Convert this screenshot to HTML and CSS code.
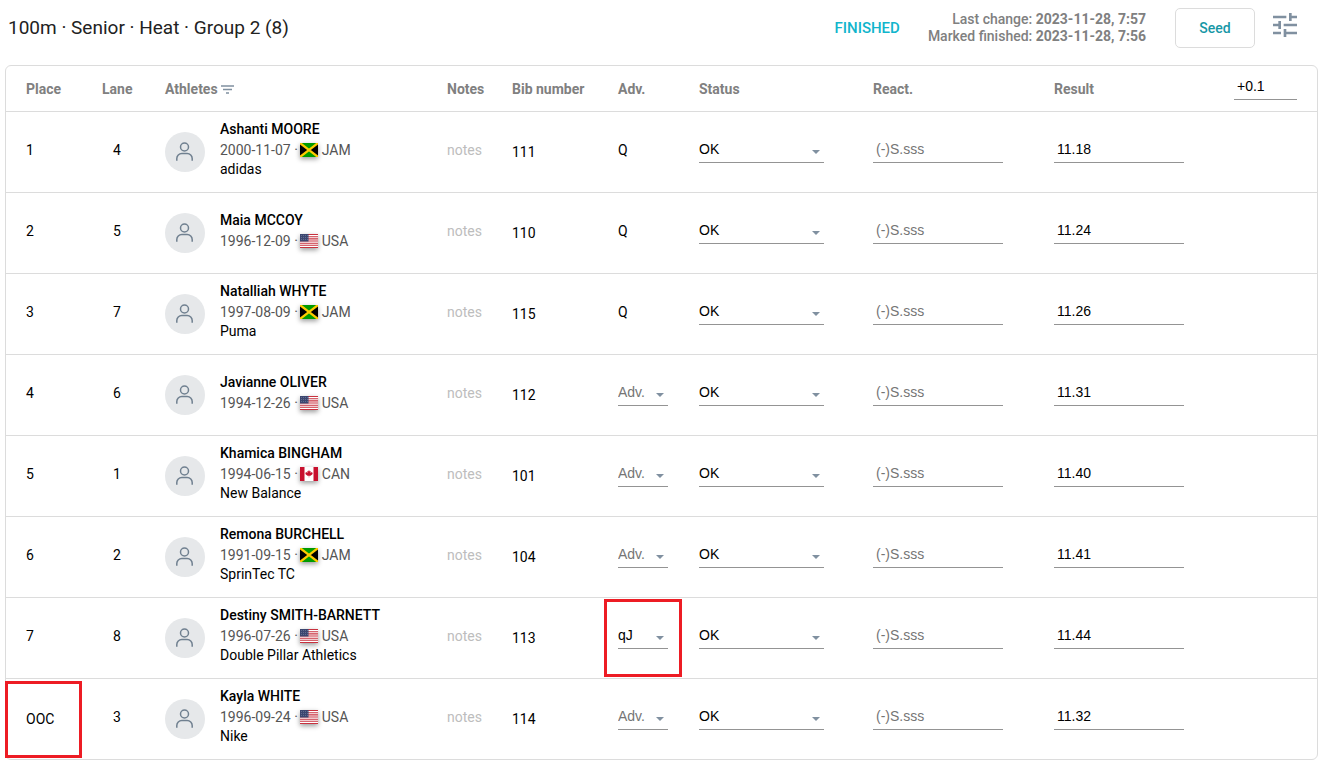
FILE: index.html
```
<!DOCTYPE html>
<html lang="en">
<head>
  <meta charset="UTF-8" />
  <meta name="viewport" content="width=device-width, initial-scale=1.0" />
  <title>100m Senior Heat - Group 2</title>
  <link rel="stylesheet" href="styles.css">
</head>
<body>
<svg class="sprite" aria-hidden="true">
  <symbol id="person" viewBox="0 0 20 20">
    <circle cx="9.500" cy="5" r="4" />
    <path d="M1.800 18.800v-2.300a5 5 0 0 1 5-5h5.400a5 5 0 0 1 5 5v2.300" />
  </symbol>
  <symbol id="jam" viewBox="0 0 18 14">
    <rect width="18" height="14" fill="#009b00" />
    <path d="M0 0v14L9 7zM18 0v14L9 7z" fill="#000" />
    <path d="M0 0l18 14M18 0L0 14" stroke="#fecb00" stroke-width="2.200" />
  </symbol>
  <symbol id="usa" viewBox="0 0 18 14">
    <rect width="18" height="14" fill="#fff" />
    <path d="M0 .5h18M0 2.700h18M0 4.900h18M0 7h18M0 9.200h18M0 11.300h18M0 13.500h18" stroke="#c8313e" stroke-width="1.100" />
    <rect width="8.500" height="7.500" fill="#3c4770" />
    <path d="M1 1.500h7M1 3.500h7M1 5.500h7" stroke="#7d86a5" stroke-width=".6" stroke-dasharray="1 1" />
  </symbol>
  <symbol id="can" viewBox="0 0 18 14">
    <rect width="18" height="14" fill="#fff" />
    <path d="M0 0h4.500v14H0zM13.500 0H18v14h-4.500z" fill="#c8102e" />
    <path d="M9 3l.8 1.500.9-.4-.2 2 1.300-1 .9 1-.3 1.200-1.900 1.500H9.200v1.700h-.4V8.800H7.500L5.600 7.300l-.3-1.200.9-1 1.300 1-.2-2 .9.400z" fill="#c8102e" />
  </symbol>
</svg>

<header class="topbar">
  <h1>100m · Senior · Heat · Group 2 (8)</h1>
  <span class="state">FINISHED</span>
  <div class="changes">
    <div>Last change: <b>2023-11-28, 7:57</b></div>
    <div>Marked finished: <b>2023-11-28, 7:56</b></div>
  </div>
  <button class="seed" type="button">Seed</button>
  <button class="tune" type="button" aria-label="Settings">
    <svg viewBox="3 3 18 18"><path d="M3 17v2h6v-2H3zM3 5v2h10V5H3zm10 16v-2h8v-2h-8v-2h-2v6h2zM7 9v2H3v2h4v2h2V9H7zm14 4v-2H11v2h10zm-6-4h2V7h4V5h-4V3h-2v6z" /></svg>
  </button>
</header>

<div class="table-box">
<table>
  <colgroup>
    <col class="c-place"><col class="c-lane"><col><col class="c-notes"><col class="c-bib">
    <col class="c-adv"><col class="c-status"><col class="c-react"><col class="c-result"><col class="c-wind">
  </colgroup>
  <thead>
    <tr>
      <th>Place</th>
      <th>Lane</th>
      <th>Athletes
        <svg class="filter" viewBox="0 0 13 9"><path d="M0 1h13M2 4.500h9M5 8h3" /></svg>
      </th>
      <th>Notes</th>
      <th>Bib number</th>
      <th>Adv.</th>
      <th>Status</th>
      <th>React.</th>
      <th>Result</th>
      <th><input class="wind" type="text" value="+0.1" aria-label="Wind"></th>
    </tr>
  </thead>
  <tbody>
    <tr>
      <td>1</td>
      <td class="lane">4</td>
      <td><div class="athlete">
        <span class="avatar"><svg><use href="#person" /></svg></span>
        <div>
          <div class="name">Ashanti MOORE</div>
          <div class="born">2000-11-07 · <svg class="flag"><use href="#jam" /></svg> JAM</div>
          <div class="club">adidas</div>
        </div>
      </div></td>
      <td class="notes">notes</td>
      <td class="bib">111</td>
      <td>Q</td>
      <td><div class="select"><select aria-label="Status"><option>OK</option></select></div></td>
      <td><input type="text" placeholder="(-)S.sss" aria-label="Reaction time"></td>
      <td><input type="text" value="11.18" aria-label="Result"></td>
      <td></td>
    </tr>
    <tr>
      <td>2</td>
      <td class="lane">5</td>
      <td><div class="athlete">
        <span class="avatar"><svg><use href="#person" /></svg></span>
        <div>
          <div class="name">Maia MCCOY</div>
          <div class="born">1996-12-09 · <svg class="flag"><use href="#usa" /></svg> USA</div>
        </div>
      </div></td>
      <td class="notes">notes</td>
      <td class="bib">110</td>
      <td>Q</td>
      <td><div class="select"><select aria-label="Status"><option>OK</option></select></div></td>
      <td><input type="text" placeholder="(-)S.sss" aria-label="Reaction time"></td>
      <td><input type="text" value="11.24" aria-label="Result"></td>
      <td></td>
    </tr>
    <tr>
      <td>3</td>
      <td class="lane">7</td>
      <td><div class="athlete">
        <span class="avatar"><svg><use href="#person" /></svg></span>
        <div>
          <div class="name">Natalliah WHYTE</div>
          <div class="born">1997-08-09 · <svg class="flag"><use href="#jam" /></svg> JAM</div>
          <div class="club">Puma</div>
        </div>
      </div></td>
      <td class="notes">notes</td>
      <td class="bib">115</td>
      <td>Q</td>
      <td><div class="select"><select aria-label="Status"><option>OK</option></select></div></td>
      <td><input type="text" placeholder="(-)S.sss" aria-label="Reaction time"></td>
      <td><input type="text" value="11.26" aria-label="Result"></td>
      <td></td>
    </tr>
    <tr>
      <td>4</td>
      <td class="lane">6</td>
      <td><div class="athlete">
        <span class="avatar"><svg><use href="#person" /></svg></span>
        <div>
          <div class="name">Javianne OLIVER</div>
          <div class="born">1994-12-26 · <svg class="flag"><use href="#usa" /></svg> USA</div>
        </div>
      </div></td>
      <td class="notes">notes</td>
      <td class="bib">112</td>
      <td><div class="select small"><select class="empty" aria-label="Advance"><option>Adv.</option></select></div></td>
      <td><div class="select"><select aria-label="Status"><option>OK</option></select></div></td>
      <td><input type="text" placeholder="(-)S.sss" aria-label="Reaction time"></td>
      <td><input type="text" value="11.31" aria-label="Result"></td>
      <td></td>
    </tr>
    <tr>
      <td>5</td>
      <td class="lane">1</td>
      <td><div class="athlete">
        <span class="avatar"><svg><use href="#person" /></svg></span>
        <div>
          <div class="name">Khamica BINGHAM</div>
          <div class="born">1994-06-15 · <svg class="flag"><use href="#can" /></svg> CAN</div>
          <div class="club">New Balance</div>
        </div>
      </div></td>
      <td class="notes">notes</td>
      <td class="bib">101</td>
      <td><div class="select small"><select class="empty" aria-label="Advance"><option>Adv.</option></select></div></td>
      <td><div class="select"><select aria-label="Status"><option>OK</option></select></div></td>
      <td><input type="text" placeholder="(-)S.sss" aria-label="Reaction time"></td>
      <td><input type="text" value="11.40" aria-label="Result"></td>
      <td></td>
    </tr>
    <tr>
      <td>6</td>
      <td class="lane">2</td>
      <td><div class="athlete">
        <span class="avatar"><svg><use href="#person" /></svg></span>
        <div>
          <div class="name">Remona BURCHELL</div>
          <div class="born">1991-09-15 · <svg class="flag"><use href="#jam" /></svg> JAM</div>
          <div class="club">SprinTec TC</div>
        </div>
      </div></td>
      <td class="notes">notes</td>
      <td class="bib">104</td>
      <td><div class="select small"><select class="empty" aria-label="Advance"><option>Adv.</option></select></div></td>
      <td><div class="select"><select aria-label="Status"><option>OK</option></select></div></td>
      <td><input type="text" placeholder="(-)S.sss" aria-label="Reaction time"></td>
      <td><input type="text" value="11.41" aria-label="Result"></td>
      <td></td>
    </tr>
    <tr>
      <td>7</td>
      <td class="lane">8</td>
      <td><div class="athlete">
        <span class="avatar"><svg><use href="#person" /></svg></span>
        <div>
          <div class="name">Destiny SMITH-BARNETT</div>
          <div class="born">1996-07-26 · <svg class="flag"><use href="#usa" /></svg> USA</div>
          <div class="club">Double Pillar Athletics</div>
        </div>
      </div></td>
      <td class="notes">notes</td>
      <td class="bib">113</td>
      <td class="marked marked-adv"><div class="select small"><select aria-label="Advance"><option>qJ</option></select></div></td>
      <td><div class="select"><select aria-label="Status"><option>OK</option></select></div></td>
      <td><input type="text" placeholder="(-)S.sss" aria-label="Reaction time"></td>
      <td><input type="text" value="11.44" aria-label="Result"></td>
      <td></td>
    </tr>
    <tr>
      <td class="ooc marked marked-place">OOC</td>
      <td class="lane">3</td>
      <td><div class="athlete">
        <span class="avatar"><svg><use href="#person" /></svg></span>
        <div>
          <div class="name">Kayla WHITE</div>
          <div class="born">1996-09-24 · <svg class="flag"><use href="#usa" /></svg> USA</div>
          <div class="club">Nike</div>
        </div>
      </div></td>
      <td class="notes">notes</td>
      <td class="bib">114</td>
      <td><div class="select small"><select class="empty" aria-label="Advance"><option>Adv.</option></select></div></td>
      <td><div class="select"><select aria-label="Status"><option>OK</option></select></div></td>
      <td><input type="text" placeholder="(-)S.sss" aria-label="Reaction time"></td>
      <td><input type="text" value="11.32" aria-label="Result"></td>
      <td></td>
    </tr>
  </tbody>
</table>
</div>
</body>
</html>
```
FILE: styles.css
```
* {
  box-sizing: border-box;
}
body {
  font-family: Roboto, sans-serif;
  font-size: 14px;
  line-height: 20px;
  background: #fff;
  color: #000;
  margin: 0;
  padding: 8px 6px 5px 5px;
}
.sprite {
  display: none;
}
.topbar {
  display: flex;
  align-items: center;
  height: 40px;
  padding: 0 21px 0 3px;
}
h1 {
  flex: 1;
  margin: 0;
  font-size: 19px;
  font-weight: 400;
  color: #222;
}
.state {
  margin-right: 28px;
  font-size: 15px;
  font-weight: 500;
  color: #11b5cc;
}
.changes {
  margin-right: 29px;
  line-height: 17px;
  font-weight: 500;
  text-align: right;
  color: #808080;
}
.changes b {
  font-weight: 700;
}
button {
  font-family: inherit;
  background: #fff;
  cursor: pointer;
}
.seed {
  width: 80px;
  height: 40px;
  border: 1px solid #dcdcdc;
  border-radius: 5px;
  font-size: 14px;
  font-weight: 500;
  color: #1797a6;
}
.tune {
  margin: 0 0 6px 18px;
  padding: 0;
  border: none;
}
.tune svg {
  display: block;
  width: 24px;
  height: 24px;
  fill: #8090a0;
}
.table-box {
  margin-top: 17px;
  border: 1px solid #dcdcdc;
  border-radius: 6px;
}
table {
  width: 100%;
  table-layout: fixed;
  border-collapse: separate;
  border-spacing: 0;
}
.c-place { width: 76px; }
.c-lane { width: 63px; }
.c-notes { width: 65px; }
.c-bib { width: 106px; }
.c-adv { width: 81px; }
.c-status { width: 174px; }
.c-react { width: 181px; }
.c-result { width: 180px; }
.c-wind { width: 103px; }
th, td {
  padding: 0 0 0 20px;
  text-align: left;
  border-bottom: 1px solid #dcdcdc;
  white-space: nowrap;
}
th {
  height: 46px;
  font-weight: 700;
  color: #808080;
}
td {
  height: 81px;
  padding-bottom: 4px;
}
tbody tr:last-child td {
  height: 80px;
  border-bottom: none;
}
.lane {
  padding-left: 7px;
  text-align: center;
}
.notes {
  color: #bdbdbd;
}
.bib, .ooc {
  padding-bottom: 0;
}
.filter {
  width: 13px;
  height: 9px;
  fill: none;
  stroke: #8090a0;
  stroke-width: 1.4;
}
.athlete {
  display: flex;
  align-items: center;
  gap: 15px;
}
.avatar {
  display: flex;
  align-items: center;
  justify-content: center;
  width: 40px;
  height: 40px;
  margin-top: 4px;
  border-radius: 50%;
  background: #e6e8ea;
}
.avatar svg {
  width: 20px;
  height: 20px;
  fill: none;
  stroke: #708090;
  stroke-width: 1.5;
}
.name {
  font-weight: 500;
}
.born {
  line-height: 22px;
  color: #555;
}
.club {
  padding-bottom: 4px;
  line-height: 16px;
}
.flag {
  width: 18px;
  height: 14px;
  margin-left: -1px;
  vertical-align: -2px;
  box-shadow: 0 2px 5px rgba(0, 0, 0, 0.4);
}
input, select {
  width: 130px;
  height: 27px;
  margin: 0 0 2px;
  padding: 0 3px;
  border: none;
  border-bottom: 1px solid #949494;
  border-radius: 0;
  background: none;
  font-family: "Liberation Sans", Arial, sans-serif;
  font-size: 14px;
  color: #000;
  appearance: none;
}
input::placeholder {
  color: #757575;
}
.wind {
  width: 63px;
  margin-bottom: 4px;
}
.select {
  position: relative;
  width: 125px;
}
.small {
  width: 50px;
}
.select select {
  display: block;
  width: 100%;
  padding: 0;
}
.select .empty {
  color: #757575;
}
/* dropdown arrow */
.select::after {
  content: "";
  position: absolute;
  right: 4px;
  bottom: 9px;
  border: 4px solid transparent;
  border-top-color: #8090a0;
  border-bottom: none;
  pointer-events: none;
}
.marked {
  position: relative;
}
.marked::after {
  content: "";
  position: absolute;
  border: 3px solid #ed1c24;
}
.marked-adv::after {
  inset: 1px -3px 1px 6px;
}
.marked-place::after {
  inset: 2px 0 1px -1px;
}
```
